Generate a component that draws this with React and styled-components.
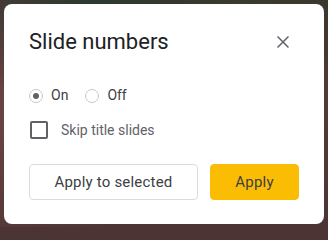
import React, { useState } from 'react';
import styled, { createGlobalStyle } from 'styled-components';

const GlobalStyle = createGlobalStyle`
  html, body {
    margin: 0;
    padding: 0;
    overflow: hidden;
  }
  body {
    font-family: Roboto, "Liberation Sans", Arial, sans-serif;
    background: #4d3434;
  }
`;

const Backdrop = styled.div`
  width: 328px;
  height: 227px;
  padding: 4px;
  box-sizing: border-box;
  overflow: hidden;
  background:
    radial-gradient(circle at 30% 0%, #2c3a30 0, transparent 40%),
    radial-gradient(circle at 75% 0%, #3a3a2c 0, transparent 35%),
    radial-gradient(circle at 0% 50%, #6a4444 0, transparent 45%),
    linear-gradient(180deg, #3b3530 0%, #553838 40%, #4d3434 100%);
`;

const Dialog = styled.div`
  width: 320px;
  box-sizing: border-box;
  background: #fff;
  border-radius: 8px;
  padding: 24px 25px 24px 25px;
  display: flex;
  flex-direction: column;
`;

const Header = styled.div`
  display: flex;
  justify-content: space-between;
  align-items: center;
  height: 28px;
`;

const Title = styled.h2`
  margin: 0;
  font-size: 22px;
  line-height: 28px;
  font-weight: 400;
  color: #202124;
`;

const CloseButton = styled.button`
  width: 24px;
  height: 24px;
  margin-right: 4px;
  padding: 0;
  border: none;
  background: none;
  display: flex;
  align-items: center;
  justify-content: center;
  cursor: pointer;
`;

const RadioGroup = styled.div`
  display: flex;
  align-items: center;
  gap: 17px;
  margin-top: 29px;
  height: 20px;
`;

const RadioOption = styled.label`
  display: flex;
  align-items: center;
  gap: 8px;
  font-size: 14px;
  line-height: 20px;
  color: #3c4043;
  cursor: pointer;
`;

const RadioCircle = styled.span`
  width: 14px;
  height: 14px;
  box-sizing: border-box;
  border: 1px solid #c8c8c8;
  border-radius: 50%;
  display: flex;
  align-items: center;
  justify-content: center;
  margin-top: 2px;

  &::after {
    content: '';
    width: 6px;
    height: 6px;
    border-radius: 50%;
    background: ${(p) => (p.$checked ? '#5f6368' : 'transparent')};
  }
`;

const CheckRow = styled.label`
  display: flex;
  align-items: center;
  gap: 13px;
  margin-top: 15px;
  height: 20px;
  font-size: 14px;
  line-height: 20px;
  color: #5f6368;
  cursor: pointer;
`;

const CheckBox = styled.span`
  width: 18px;
  height: 18px;
  box-sizing: border-box;
  border: 2px solid #5f6368;
  border-radius: 2px;
  margin-left: 1px;
`;

const Actions = styled.div`
  display: flex;
  gap: 12px;
  margin-top: 24px;
`;

const Button = styled.button`
  height: 36px;
  width: ${(p) => p.$width}px;
  box-sizing: border-box;
  border-radius: 4px;
  border: 1px solid ${(p) => (p.$primary ? '#fbbc04' : '#dadce0')};
  background: ${(p) => (p.$primary ? '#fbbc04' : '#fff')};
  color: #3c4043;
  font-family: Roboto, "Liberation Sans", Arial, sans-serif;
  font-size: 15px;
  font-weight: 400;
  letter-spacing: 0.2px;
  cursor: pointer;
`;

export default function App() {
  const [on, setOn] = useState(true);
  return (
    <>
      <GlobalStyle />
      <Backdrop>
        <Dialog>
          <Header>
            <Title>Slide numbers</Title>
            <CloseButton aria-label="Close">
              <svg width="12" height="12" viewBox="0 0 12 12">
                <path d="M0.5 0.5L11.5 11.5M11.5 0.5L0.5 11.5" stroke="#5f6368" strokeWidth="1.5" fill="none" />
              </svg>
            </CloseButton>
          </Header>
          <RadioGroup>
            <RadioOption onClick={() => setOn(true)}>
              <RadioCircle $checked={on} />
              On
            </RadioOption>
            <RadioOption onClick={() => setOn(false)}>
              <RadioCircle $checked={!on} />
              Off
            </RadioOption>
          </RadioGroup>
          <CheckRow>
            <CheckBox />
            Skip title slides
          </CheckRow>
          <Actions>
            <Button $width={169}>Apply to selected</Button>
            <Button $width={89} $primary>Apply</Button>
          </Actions>
        </Dialog>
      </Backdrop>
    </>
  );
}
